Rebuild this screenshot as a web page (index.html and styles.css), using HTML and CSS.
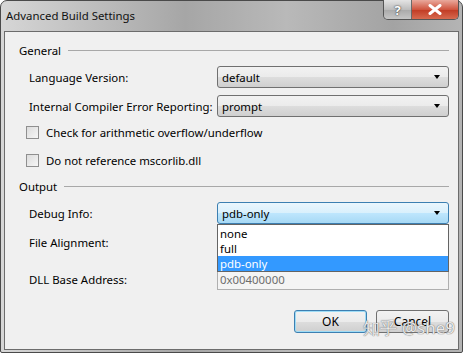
FILE: index.html
```html
<!DOCTYPE html>
<html lang="en">
<head>
    <meta charset="UTF-8">
    <title>Advanced Build Settings</title>
    <link rel="stylesheet" href="styles.css">
</head>
<body>
    <div class="window">
        <div class="titlebar">
            <span class="title">Advanced Build Settings</span>
            <div class="capButtons">
                <span class="capBtn helpBtn">?</span>
                <span class="capBtn closeBtn">
                    <svg width="14" height="11" viewBox="0 0 14 11">
                        <path d="M2 1.5 L12 9.5 M12 1.5 L2 9.5" stroke="#fff" stroke-width="3" stroke-linecap="round"/>
                    </svg>
                </span>
            </div>
        </div>

        <div class="client">
            <div class="legend"><span>General</span><i class="rule"></i></div>

            <div class="row first">
                <label>Language Version:</label>
                <div class="combo"><span>default</span><b class="arrow"></b></div>
            </div>
            <div class="row">
                <label>Internal Compiler Error Reporting:</label>
                <div class="combo"><span>prompt</span><b class="arrow"></b></div>
            </div>

            <div class="check first"><i class="box"></i>Check for arithmetic overflow/underflow</div>
            <div class="check"><i class="box"></i>Do not reference mscorlib.dll</div>

            <div class="legend output"><span>Output</span><i class="rule"></i></div>

            <div class="row first dropRow">
                <label>Debug Info:</label>
                <div class="combo open"><span>pdb-only</span><b class="arrow"></b></div>
                <ul class="dropList">
                    <li>none</li>
                    <li>full</li>
                    <li class="selected">pdb-only</li>
                </ul>
            </div>
            <div class="row">
                <label>File Alignment:</label>
                <div class="combo"><span></span><b class="arrow"></b></div>
            </div>
            <div class="row dll">
                <label>DLL Base Address:</label>
                <div class="textbox">0x00400000</div>
            </div>

            <div class="buttons">
                <button class="btn default">OK</button>
                <button class="btn">Cancel</button>
            </div>

            <div class="watermark">知乎 @she9</div>
        </div>
    </div>
</body>
</html>
```

FILE: styles.css
```css
body {
    margin: 0;
    background: #fff;
    font-family: "Noto Sans", "Open Sans", sans-serif;
    font-size: 11.4px;
    color: #000;
}

.window {
    width: 463px;
    height: 353px;
    box-sizing: border-box;
    border: 1px solid #4a4a4a;
    border-radius: 7px 7px 2px 2px;
    background: linear-gradient(to right, #d6d6d6 0%, #c4c4c4 15%, #a6a6a6 40%, #b9b9b9 62%, #a3a3a3 85%, #b4b4b4 100%);
    padding: 0 3px;
}

.titlebar {
    height: 30px;
    display: flex;
    justify-content: space-between;
    align-items: flex-start;
}

.title {
    margin: 7px 0 0 2px;
    line-height: 16px;
    color: #111;
}

.capButtons {
    display: flex;
    margin-top: -1px;
    border: 1px solid #555;
    border-top: none;
    border-radius: 0 0 5px 5px;
    overflow: hidden;
}

.capBtn {
    height: 19px;
    display: flex;
    align-items: center;
    justify-content: center;
}

.helpBtn {
    width: 27px;
    background: linear-gradient(#e4e4e4, #bdbdbd 50%, #a9a9a9 51%, #c6c6c6);
    border-right: 1px solid #6a6a6a;
    color: #fff;
    font-weight: bold;
    font-size: 13px;
    text-shadow: 0 0 2px #444, 0 0 1px #444;
}

.closeBtn {
    width: 46px;
    background: linear-gradient(#e9a99c, #d0553f 50%, #c03a23 51%, #d76a4f);
}

.client {
    position: relative;
    height: 317px;
    border: 1px solid #6c6c6c;
    background: #f0f0f0;
    padding: 0 9px 0 14px;
}

.legend {
    display: flex;
    align-items: center;
    height: 16px;
    margin-top: 10px;
}

.legend.output {
    margin-top: 10px;
}

.rule {
    flex: 1;
    height: 1px;
    background: #a8a8a8;
    margin: 1px 0 0 7px;
}

.row {
    display: flex;
    align-items: center;
    margin: 7px 0 0 10px;
    white-space: nowrap;
}

.row.first {
    margin-top: 8px;
}

.row label {
    flex: 0 0 188px;
}

.combo {
    flex: 1;
    height: 22px;
    box-sizing: border-box;
    border: 1px solid #707070;
    border-radius: 3px;
    background: linear-gradient(#f2f2f2, #ebebeb 50%, #dddddd 51%, #cfcfcf);
    display: flex;
    align-items: center;
    justify-content: space-between;
    padding: 0 8px 0 4px;
}

.combo.open {
    border-color: #3c7fb1;
    background: linear-gradient(#eaf6fd, #d9f0fc 50%, #bee6fd 51%, #a7d9f5);
}

.arrow {
    width: 0;
    height: 0;
    border-left: 3.5px solid transparent;
    border-right: 3.5px solid transparent;
    border-top: 4px solid #000;
}

.check {
    display: flex;
    align-items: center;
    height: 16px;
    margin: 7px 0 0 7px;
}

.check + .check {
    margin-top: 12px;
}

.box {
    width: 11px;
    height: 11px;
    border: 1px solid #8f8f8f;
    background: linear-gradient(135deg, #dcdcdc, #f6f6f6);
    margin-right: 7px;
}

.dropRow {
    position: relative;
}

.dropList {
    position: absolute;
    left: 188px;
    right: 0;
    top: 22px;
    margin: 0;
    padding: 1px 0 0;
    list-style: none;
    background: #fff;
    border: 1px solid #646464;
    z-index: 2;
}

.dropList li {
    height: 15px;
    line-height: 15px;
    padding-left: 2px;
}

.dropList li.selected {
    background: #3399ff;
    color: #fff;
}

.row.dll {
    margin-top: 16px;
}

.textbox {
    flex: 1;
    height: 21px;
    box-sizing: border-box;
    border: 1px solid #afafaf;
    background: #f4f4f4;
    color: #6d6d6d;
    line-height: 19px;
    padding-left: 2px;
}

.buttons {
    display: flex;
    justify-content: flex-end;
    gap: 9px;
    margin-top: 20px;
}

.btn {
    width: 73px;
    height: 23px;
    font: inherit;
    font-size: 12px;
    border: 1px solid #707070;
    border-radius: 3px;
    background: linear-gradient(#f2f2f2, #ebebeb 50%, #dddddd 51%, #cfcfcf);
    padding: 0;
}

.btn.default {
    border-color: #3c7fb1;
    box-shadow: inset 0 0 0 1px #9edcf6;
}

.watermark {
    position: absolute;
    right: 3px;
    bottom: 9px;
    font-size: 17px;
    color: rgba(255, 255, 255, 0.85);
    text-shadow: 0 0 1px #777, 0 0 1px #777;
    pointer-events: none;
}
```
